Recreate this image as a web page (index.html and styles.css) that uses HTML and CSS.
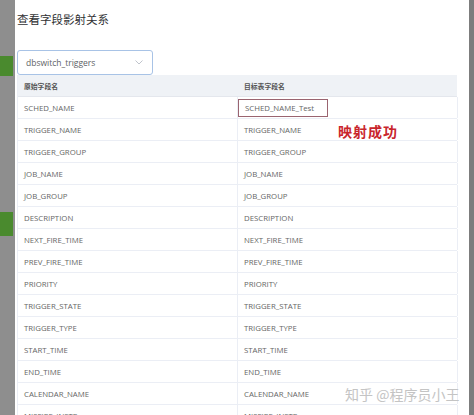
FILE: index.html
```html
<!DOCTYPE html>
<html>
<head>
<meta charset="utf-8">
<link rel="stylesheet" href="styles.css">
</head>
<body>
<div class="page">
  <div class="side-left">
    <div class="green g1"></div>
    <div class="green g2"></div>
  </div>
  <div class="modal">
    <div class="title">查看字段影射关系</div>
    <div class="select">
      <span>dbswitch_triggers</span>
      <svg class="chev" width="8" height="5" viewBox="0 0 8 5"><path d="M0.5 0.5 L4 4 L7.5 0.5" fill="none" stroke="#c0c4cc" stroke-width="1"/></svg>
    </div>
    <div class="table">
      <div class="row head"><div class="cell">原始字段名</div><div class="cell">目标表字段名</div></div>
      <div class="row"><div class="cell">SCHED_NAME</div><div class="cell"><span class="edit">SCHED_NAME_Test</span></div></div>
      <div class="row"><div class="cell">TRIGGER_NAME</div><div class="cell">TRIGGER_NAME</div></div>
      <div class="row"><div class="cell">TRIGGER_GROUP</div><div class="cell">TRIGGER_GROUP</div></div>
      <div class="row"><div class="cell">JOB_NAME</div><div class="cell">JOB_NAME</div></div>
      <div class="row"><div class="cell">JOB_GROUP</div><div class="cell">JOB_GROUP</div></div>
      <div class="row"><div class="cell">DESCRIPTION</div><div class="cell">DESCRIPTION</div></div>
      <div class="row"><div class="cell">NEXT_FIRE_TIME</div><div class="cell">NEXT_FIRE_TIME</div></div>
      <div class="row"><div class="cell">PREV_FIRE_TIME</div><div class="cell">PREV_FIRE_TIME</div></div>
      <div class="row"><div class="cell">PRIORITY</div><div class="cell">PRIORITY</div></div>
      <div class="row"><div class="cell">TRIGGER_STATE</div><div class="cell">TRIGGER_STATE</div></div>
      <div class="row"><div class="cell">TRIGGER_TYPE</div><div class="cell">TRIGGER_TYPE</div></div>
      <div class="row"><div class="cell">START_TIME</div><div class="cell">START_TIME</div></div>
      <div class="row"><div class="cell">END_TIME</div><div class="cell">END_TIME</div></div>
      <div class="row"><div class="cell">CALENDAR_NAME</div><div class="cell">CALENDAR_NAME</div></div>
      <div class="row"><div class="cell">MISFIRE_INSTR</div><div class="cell">MISFIRE_INSTR</div></div>
    </div>
    <div class="success">映射成功</div>
    <div class="watermark">知乎 @程序员小王</div>
  </div>
  <div class="side-right"></div>
</div>
</body>
</html>
```
FILE: styles.css
```css
html, body {
  margin: 0;
  padding: 0;
  width: 474px;
  height: 415px;
  overflow: hidden;
  background: #fff;
}
.page {
  display: flex;
  width: 474px;
  height: 415px;
  font-family: "Open Sans", "Noto Sans CJK SC", sans-serif;
}
.side-left {
  width: 15px;
  background: #8e8e8e;
  display: flex;
  flex-direction: column;
}
.green {
  width: 13px;
  background: #4a8a2e;
}
.g1 { margin-top: 56px; height: 20px; }
.g2 { margin-top: 136px; height: 24px; }
.modal {
  flex: 1;
  position: relative;
  background: #fff;
  padding: 0 0 0 2px;
  overflow: hidden;
}
.side-right {
  width: 5px;
  background: #7d7d7d;
}
.title {
  font-family: "Noto Sans CJK SC", sans-serif;
  font-size: 11.5px;
  color: #303133;
  line-height: 20px;
  margin-top: 9px;
  height: 20px;
}
.select {
  margin-top: 21px;
  border: 1px solid #a8c3e6;
  border-radius: 3px;
  display: flex;
  align-items: center;
  justify-content: space-between;
  padding: 0 9px 0 8px;
  box-sizing: border-box;
  width: 136px;
  height: 25px;
  font-size: 8.5px;
  color: #606266;
}
.table {
  width: 440px;
  border-left: 1px solid #ebeef5;
  box-sizing: border-box;
}
.row {
  display: grid;
  grid-template-columns: 220px 220px;
  height: 22px;
  border-bottom: 1px solid #ebeef5;
  box-sizing: border-box;
}
.row.head {
  background: #eff2f6;
  border-bottom: 1px solid #e4e7ed;
}
.cell {
  display: flex;
  align-items: center;
  padding-left: 6px;
  font-size: 7.8px;
  color: #666;
  border-right: 1px solid #ebeef5;
}
.head .cell {
  font-family: "Noto Sans CJK SC", sans-serif;
  font-size: 6.8px;
  color: #555;
  font-weight: bold;
  border-right: none;
}
.edit {
  display: flex;
  align-items: center;
  margin-left: -6px;
  padding-left: 6px;
  width: 90px;
  height: 18px;
  box-sizing: border-box;
  border: 1px solid #9a6470;
}
.success {
  position: absolute;
  left: 323px;
  top: 121px;
  font-family: "Noto Sans CJK SC", sans-serif;
  font-size: 14px;
  font-weight: bold;
  color: #c9252c;
  line-height: 20px;
  letter-spacing: 1px;
}
.watermark {
  position: absolute;
  left: 330px;
  top: 384px;
  font-family: "Noto Sans CJK SC", sans-serif;
  font-size: 14px;
  color: #c4c4c4;
  line-height: 20px;
  white-space: nowrap;
}
```
